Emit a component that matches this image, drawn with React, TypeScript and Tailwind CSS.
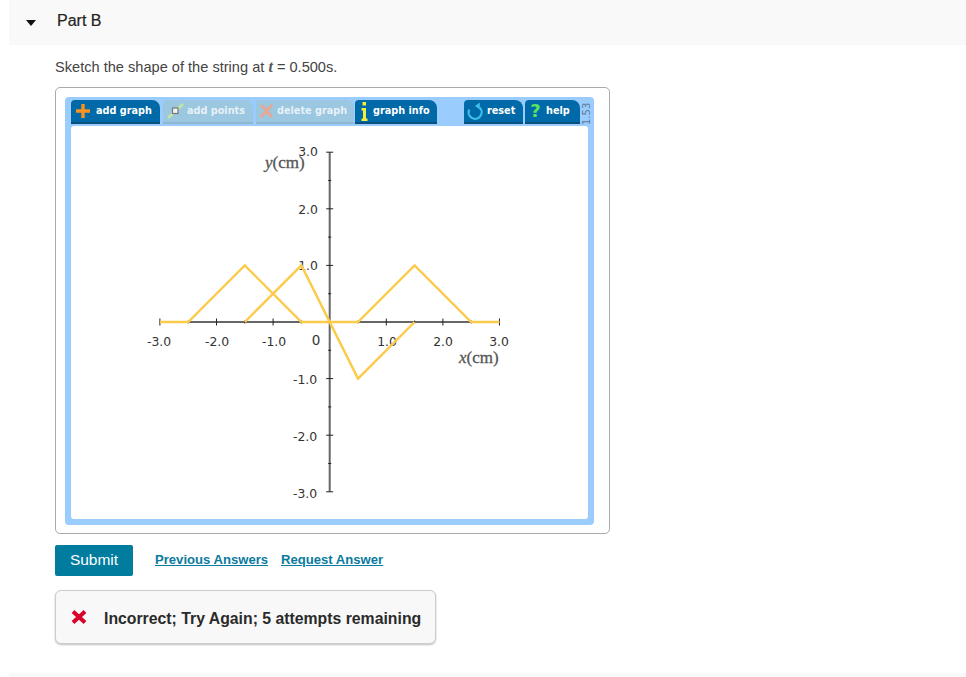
import type { ReactNode } from "react";

const ox = 258.7;
const oy = 196;
const unit = 56.6;
const px = (v: number) => ox + v * unit;
const py = (v: number) => oy - v * unit;

const lineA: [number, number][] = [[-3, 0], [-2.5, 0], [-1.5, 1], [-0.5, 0], [0.5, 0], [1.5, 1], [2.5, 0], [3, 0]];
const lineB: [number, number][] = [[-1.5, 0], [-0.5, 1], [0.5, -1], [1.5, 0]];
const toPoints = (pts: [number, number][]) => pts.map(([x, y]) => `${px(x)},${py(y)}`).join(" ");

const halves = [-3, -2.5, -2, -1.5, -1, -0.5, 0.5, 1, 1.5, 2, 2.5, 3];

function Chart() {
  return (
    <svg width="517" height="393" viewBox="0 0 517 393" className="block">
      <g stroke="#666" fill="none">
        <line x1={px(-3)} y1={oy} x2={px(3)} y2={oy} strokeWidth="2" />
        <line x1={ox} y1={py(3)} x2={ox} y2={py(-3)} strokeWidth="2" />
      </g>
      <g stroke="#222" strokeWidth="1">
        {halves.map((v) => {
          const major = Number.isInteger(v);
          const s = major ? 3.5 : 1.5;
          return (
            <g key={v}>
              <line x1={px(v)} y1={oy - s} x2={px(v)} y2={oy + s} />
              <line x1={ox - s} y1={py(v)} x2={ox + s} y2={py(v)} />
            </g>
          );
        })}
      </g>
      <g fontFamily="'DejaVu Sans', sans-serif" fontSize="12.4" fill="#333" textAnchor="middle">
        <text x="88" y="220">-3.0</text>
        <text x="146" y="220">-2.0</text>
        <text x="203" y="220">-1.0</text>
        <text x="245" y="219" fontSize="13.5">0</text>
        <text x="316" y="220">1.0</text>
        <text x="372" y="220">2.0</text>
        <text x="428" y="220">3.0</text>
        <text x="237" y="30">3.0</text>
        <text x="237" y="88">2.0</text>
        <text x="237" y="144">1.0</text>
        <text x="234" y="258">-1.0</text>
        <text x="234" y="315">-2.0</text>
        <text x="234" y="372">-3.0</text>
      </g>
      <text x="194" y="42" fontFamily="'Liberation Serif', serif" fontSize="17" fill="#555" stroke="#555" strokeWidth="0.3">
        <tspan fontStyle="italic">y</tspan>(cm)
      </text>
      <text x="388" y="237" fontFamily="'Liberation Serif', serif" fontSize="17" fill="#555" stroke="#555" strokeWidth="0.3">
        <tspan fontStyle="italic">x</tspan>(cm)
      </text>
      <polyline points={toPoints(lineA)} fill="none" stroke="#fdcb4c" strokeWidth="2.4" />
      <polyline points={toPoints(lineB)} fill="none" stroke="#fdcb4c" strokeWidth="2.4" />
    </svg>
  );
}

function ToolButton({ icon, label, width, off }: { icon: ReactNode; label: string; width: string; off?: boolean }) {
  return (
    <div
      className={`${width} h-[24px] flex items-center rounded-tl-[4px] rounded-tr-[8px] border-b-2 font-['DejaVu_Sans',sans-serif] text-[9.7px] font-bold whitespace-nowrap ${
        off ? "bg-[#9cc7e0] border-[#8fb6d2] text-[#e6f1f8]" : "bg-[#0069a8] border-[#0a4f80] text-white"
      }`}
    >
      {icon}
      <span>{label}</span>
    </div>
  );
}

const PlusIcon = (
  <svg width="25" height="20" viewBox="0 0 25 20" className="shrink-0">
    <path d="M5 10h14M12 3v14" stroke="#f7931e" strokeWidth="3.4" />
  </svg>
);
const PointsIcon = (
  <svg width="24" height="20" viewBox="0 0 24 20" className="shrink-0">
    <path d="M5 17L20 3" stroke="#c3e6a0" strokeWidth="2.6" />
    <rect x="9.5" y="7" width="5.5" height="5.5" fill="#f2f2f2" stroke="#777" strokeWidth="1.2" />
  </svg>
);
const CrossIcon = (
  <svg width="21" height="20" viewBox="0 0 21 20" className="shrink-0">
    <path d="M5 4l11 12M16 4L5 16" stroke="#eba68f" strokeWidth="2.6" />
  </svg>
);
const InfoIcon = (
  <svg width="18" height="22" viewBox="0 0 18 22" className="shrink-0">
    <rect x="7.5" y="2" width="3.5" height="3.5" fill="#f5ee3a" />
    <path d="M6.5 8h4.5v10.5h1.5V21h-6v-2.5H8V10.5H6.5z" fill="#f5ee3a" />
  </svg>
);
const ResetIcon = (
  <svg width="23" height="20" viewBox="0 0 23 20" className="shrink-0">
    <path d="M5.3 8.5A6.5 6.5 0 1 0 15.5 6.5" fill="none" stroke="#3fc0e8" strokeWidth="2.2" />
    <path d="M15.8 1.5v7l-4.8-3.5z" fill="#3fc0e8" />
  </svg>
);

export default function App() {
  return (
    <div className="w-[966px] h-[677px] overflow-hidden bg-white font-['Liberation_Sans',Arial,sans-serif] flex flex-col">
      <div className="ml-[9px] h-[45px] bg-[#f9f9f9] flex items-center shrink-0">
        <span className="ml-[17px] w-0 h-0 border-x-[5.5px] border-x-transparent border-t-[6px] border-t-[#111]" />
        <span className="ml-[21px] pb-[4px] text-[16px] text-[#222] [-webkit-text-stroke:0.2px_#222]">Part B</span>
      </div>

      <div className="ml-[55px] flex flex-col items-start">
        <p className="mt-[13px] h-[18px] text-[14.6px] leading-[18px] text-[#444]">
          Sketch the shape of the string at <i className="font-['Liberation_Serif',serif] text-[16px] font-bold text-[#555]">t</i> = 0.500s.
        </p>

        <div className="mt-[11px] w-[555px] h-[447px] border border-[#aaa] rounded-[5px] pl-[9px] pt-[9px]">
          <div className="w-[529px] h-[428px] bg-[#9accfd] rounded-[4px] px-[6px] pt-[3px]">
            <div className="flex h-[26px] relative">
              <ToolButton width="w-[89px] mr-[3px]" icon={PlusIcon} label="add graph" />
              <ToolButton width="w-[90px] mr-[3px]" icon={PointsIcon} label="add points" off />
              <ToolButton width="w-[98px] mr-[1px]" icon={CrossIcon} label="delete graph" off />
              <ToolButton width="w-[82px] mr-[27px]" icon={InfoIcon} label="graph info" />
              <ToolButton width="w-[59px] mr-[2px]" icon={ResetIcon} label="reset" />
              <ToolButton
                width="w-[55px]"
                icon={<span className="w-[21px] text-center text-[18px] leading-none text-[#59e35f] shrink-0">?</span>}
                label="help"
              />
              <span className="absolute right-[-4px] top-[2px] h-[24px] [writing-mode:vertical-rl] rotate-180 text-center font-['DejaVu_Sans',sans-serif] text-[10px] leading-none text-[#5b7d99]">
                1.53
              </span>
            </div>
            <div className="w-[517px] h-[393px] bg-white rounded-[3px]">
              <Chart />
            </div>
          </div>
        </div>

        <div className="mt-[11px] flex items-center">
          <button className="w-[78px] h-[31px] pb-[2px] bg-[#007c9f] rounded-[2px] text-white text-[15.5px]">Submit</button>
          <a className="ml-[22px] pb-[2px] text-[13.1px] font-bold text-[#0a7a9e] underline">Previous Answers</a>
          <a className="ml-[13px] pb-[2px] text-[13.1px] font-bold text-[#0a7a9e] underline">Request Answer</a>
        </div>

        <div className="mt-[14px] w-[381px] h-[54px] pt-[3px] bg-[#f8f8f8] border border-[#ccc] rounded-[6px] shadow-[0_1px_2px_rgba(0,0,0,0.25)] flex items-center">
          <svg width="16" height="16" viewBox="0 0 16 16" className="ml-[15px] mb-[3px] shrink-0">
            <path d="M2 2.5l12 11M14 2.5l-12 11" stroke="#d9002b" strokeWidth="4" />
          </svg>
          <span className="ml-[17px] text-[15.8px] font-bold text-[#2a2a2a] whitespace-nowrap">
            Incorrect; Try Again; 5 attempts remaining
          </span>
        </div>
      </div>

      <div className="ml-[9px] mt-[29px] h-[10px] bg-[#f9f9f9] shrink-0" />
    </div>
  );
}
